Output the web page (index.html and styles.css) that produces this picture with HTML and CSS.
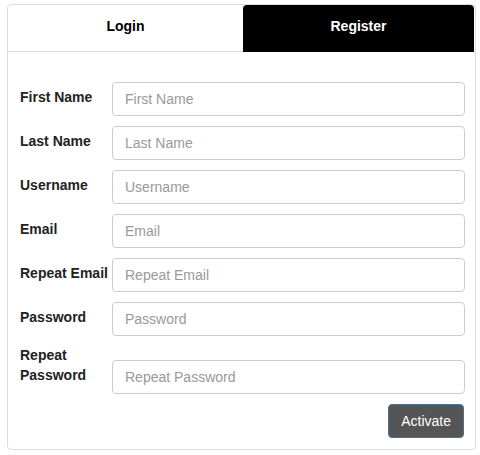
FILE: index.html
```html
<!DOCTYPE html>
<html>
<head>
<meta charset="utf-8">
<link rel="stylesheet" href="styles.css">
</head>
<body>
<div class="page">
  <div class="card">
    <div class="tabs">
      <div class="tab">Login</div>
      <div class="tab active">Register</div>
    </div>
    <form class="form">
      <div class="row"><label class="label">First Name</label><input class="input" placeholder="First Name"></div>
      <div class="row"><label class="label">Last Name</label><input class="input" placeholder="Last Name"></div>
      <div class="row"><label class="label">Username</label><input class="input" placeholder="Username"></div>
      <div class="row"><label class="label">Email</label><input class="input" placeholder="Email"></div>
      <div class="row"><label class="label">Repeat Email</label><input class="input" placeholder="Repeat Email"></div>
      <div class="row"><label class="label">Password</label><input class="input" placeholder="Password"></div>
      <div class="row"><label class="label">Repeat Password</label><input class="input" placeholder="Repeat Password"></div>
      <div class="actions"><button type="button" class="btn">Activate</button></div>
    </form>
  </div>
</div>
</body>
</html>
```
FILE: styles.css
```css
* { box-sizing: border-box; }
body {
  margin: 0;
  background: #fff;
  font-family: "Liberation Sans", Arial, sans-serif;
  font-size: 14px;
  line-height: 20px;
  color: #333;
}
.page {
  padding: 4px 0 0 7px;
}
.card {
  width: 469px;
  height: 446px;
  border: 1px solid #dddddd;
  border-radius: 4px;
  display: flex;
  flex-direction: column;
}
.tabs {
  display: grid;
  grid-template-columns: 235px 1fr;
  height: 47px;
}
.tab {
  display: flex;
  align-items: center;
  justify-content: center;
  font-weight: bold;
  color: #000;
  border-bottom: 1px solid #dddddd;
  padding-bottom: 4px;
}
.tab.active {
  background: #000;
  color: #fff;
  border-bottom: none;
  border-radius: 4px 4px 0 0;
  margin-right: 1px;
  padding-bottom: 5px;
}
.form {
  padding: 30px 10px 0 12px;
  display: flex;
  flex-direction: column;
  gap: 10px;
}
.row {
  display: flex;
  align-items: flex-end;
}
.label {
  width: 92px;
  flex: none;
  font-weight: bold;
  color: #222;
  line-height: 20px;
  padding-bottom: 9px;
  padding-right: 4px;
  margin-top: -1px;
}
.input {
  flex: 1;
  height: 34px;
  padding: 6px 12px;
  border: 1px solid #cccccc;
  border-radius: 4px;
  font-family: inherit;
  font-size: 14px;
  color: #555;
  background: #fff;
}
.input::placeholder {
  color: #999999;
}
.actions {
  display: flex;
  justify-content: flex-end;
}
.btn {
  height: 34px;
  padding: 6px 12px;
  margin-right: 1px;
  background: #555555;
  color: #fff;
  border: 1px solid #4f6f96;
  border-radius: 4px;
  font-family: inherit;
  font-size: 14px;
  line-height: 20px;
}
```
